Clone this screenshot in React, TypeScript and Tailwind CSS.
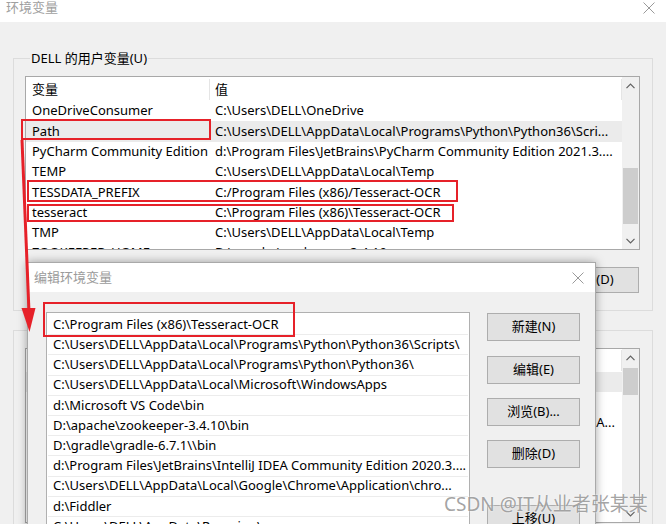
import React from "react";

const userVars: [string, string][] = [
  ["OneDriveConsumer", "C:\\Users\\DELL\\OneDrive"],
  ["Path", "C:\\Users\\DELL\\AppData\\Local\\Programs\\Python\\Python36\\Scri..."],
  ["PyCharm Community Edition", "d:\\Program Files\\JetBrains\\PyCharm Community Edition 2021.3...."],
  ["TEMP", "C:\\Users\\DELL\\AppData\\Local\\Temp"],
  ["TESSDATA_PREFIX", "C:/Program Files (x86)/Tesseract-OCR"],
  ["tesseract", "C:\\Program Files (x86)\\Tesseract-OCR"],
  ["TMP", "C:\\Users\\DELL\\AppData\\Local\\Temp"],
  ["ZOOKEEPER_HOME", "D:\\apache\\zookeeper-3.4.10"],
];

const sysVars: [string, string, boolean][] = [
  ["ComSpec", "C:\\Windows\\system32\\cmd.exe", false],
  ["DriverData", "C:\\Windows\\System32\\Drivers\\DriverData", false],
  ["IDEA_HOME", "d:\\Program Files\\JetBrains\\IntelliJ IDEA Community Edition 2020.3;d:\\Program Files\\JetBrains\\IntelliJ IDEA...", true],
  ["JAVA_HOME", "C:\\Program Files\\Java\\jdk1.8.0_211", false],
  ["NUMBER_OF_PROCESSORS", "8", false],
  ["OS", "Windows_NT", false],
  ["Path", "C:\\Windows\\system32", false],
  ["PATHEXT", ".COM;.EXE;.BAT", false],
];

const pathItems: string[] = [
  "C:\\Program Files (x86)\\Tesseract-OCR",
  "C:\\Users\\DELL\\AppData\\Local\\Programs\\Python\\Python36\\Scripts\\",
  "C:\\Users\\DELL\\AppData\\Local\\Programs\\Python\\Python36\\",
  "C:\\Users\\DELL\\AppData\\Local\\Microsoft\\WindowsApps",
  "d:\\Microsoft VS Code\\bin",
  "D:\\apache\\zookeeper-3.4.10\\bin",
  "D:\\gradle\\gradle-6.7.1\\\\bin",
  "d:\\Program Files\\JetBrains\\IntelliJ IDEA Community Edition 2020.3....",
  "C:\\Users\\DELL\\AppData\\Local\\Google\\Chrome\\Application\\chro...",
  "d:\\Fiddler",
  "C:\\Users\\DELL\\AppData\\Roaming\\npm",
];

function Chevron({ up }: { up?: boolean }) {
  return (
    <svg width="9" height="6" viewBox="0 0 9 6" className="block">
      <polyline
        points={up ? "0.5,5.2 4.5,1.2 8.5,5.2" : "0.5,0.8 4.5,4.8 8.5,0.8"}
        fill="none"
        stroke="#606060"
        strokeWidth="1.2"
      />
    </svg>
  );
}

function Button({ children, className = "" }: { children: React.ReactNode; className?: string }) {
  return (
    <div
      className={
        "flex items-center justify-center bg-[#e1e1e1] border border-[#adadad] text-black whitespace-nowrap " +
        className
      }
    >
      {children}
    </div>
  );
}

function ListHeader() {
  return (
    <div className="h-[23px] flex shrink-0">
      <div className="w-[184px] pl-[6px] flex items-center border-r border-[#e5e5e5] my-[1px]">变量</div>
      <div className="flex-1 min-w-0 pl-[5px] flex items-center border-r border-[#e5e5e5] my-[1px]">值</div>
    </div>
  );
}

export default function App() {
  return (
    <div className="relative w-[666px] h-[524px] overflow-hidden bg-[#f0f0f0] text-[13px] text-black font-['Noto_Sans','Noto_Sans_CJK_SC',sans-serif]">
      {/* background window title bar */}
      <div className="h-[22px] bg-white flex items-start justify-between pl-[6px] pr-[11px]">
        <span className="leading-[15px] text-[#a0a0a0]">环境变量</span>
        <svg width="12" height="12" viewBox="0 0 12 12" className="mt-[2px]">
          <path d="M0.5 0.5 L11.5 11.5 M11.5 0.5 L0.5 11.5" stroke="#9a9a9a" strokeWidth="1" />
        </svg>
      </div>

      {/* user variables group */}
      <fieldset className="min-w-0 mx-[13px] mt-[28px] border border-[#dcdcdc] pl-[11px] pr-[12px] pt-[10px] pb-[17px]">
        <legend className="ml-[5px] px-[1px] leading-[16px]">DELL 的用户变量(U)</legend>
        <div className="h-[174px] border border-[#a8a8a8] bg-white flex">
          <div className="flex-1 min-w-0 flex flex-col overflow-hidden pt-[1px]">
            <ListHeader />
            {userVars.map(([k, v], i) => (
              <div
                key={k}
                className={"h-[20.3px] shrink-0 flex items-center " + (i === 1 ? "bg-[#ebebeb]" : "")}
              >
                <div className="w-[184px] shrink-0 pl-[6px] whitespace-nowrap overflow-hidden">{k}</div>
                <div className="flex-1 min-w-0 pl-[5px] whitespace-nowrap overflow-hidden">{v}</div>
              </div>
            ))}
          </div>
          <div className="w-[17px] shrink-0 bg-[#f0f0f0] flex flex-col">
            <div className="h-[17px] flex items-center justify-center">
              <Chevron up />
            </div>
            <div className="flex-1 px-[1px]">
              <div className="mt-[74px] h-[56px] bg-[#cdcdcd]" />
            </div>
            <div className="h-[17px] flex items-center justify-center">
              <Chevron />
            </div>
          </div>
        </div>
        <div className="mt-[17px] flex justify-end gap-[8px] pr-[1px]">
          <Button className="w-[94px] h-[26px]">新建(N)...</Button>
          <Button className="w-[94px] h-[26px]">编辑(E)...</Button>
          <Button className="w-[94px] h-[26px]">删除(D)</Button>
        </div>
      </fieldset>

      {/* system variables group */}
      <fieldset className="min-w-0 mx-[13px] mt-[11px] border border-[#dcdcdc] pl-[11px] pr-[12px] pt-[10px] pb-[17px]">
        <legend className="ml-[5px] px-[1px] leading-[16px]">系统变量(S)</legend>
        <div className="h-[175px] border border-[#a8a8a8] bg-white flex">
          <div className="flex-1 min-w-0 flex flex-col overflow-hidden">
            <ListHeader />
            {sysVars.map(([k, v, tail], i) => (
              <div
                key={k}
                className={"h-[20.3px] shrink-0 flex items-center " + (i === 0 ? "bg-[#ebebeb]" : "")}
              >
                <div className="w-[184px] shrink-0 pl-[6px] whitespace-nowrap overflow-hidden">{k}</div>
                <div
                  className={
                    "flex-1 min-w-0 pl-[5px] pr-[7px] flex overflow-hidden " +
                    (tail ? "justify-end" : "justify-start")
                  }
                >
                  <span className="whitespace-nowrap shrink-0">{v}</span>
                </div>
              </div>
            ))}
          </div>
          <div className="w-[17px] shrink-0 bg-[#f0f0f0] flex flex-col">
            <div className="h-[17px] flex items-center justify-center">
              <Chevron up />
            </div>
            <div className="flex-1 px-[1px]">
              <div className="mt-[2px] h-[27px] bg-[#cdcdcd]" />
            </div>
            <div className="h-[17px] flex items-center justify-center">
              <Chevron />
            </div>
          </div>
        </div>
      </fieldset>

      {/* edit environment variable dialog (window over window) */}
      <div className="absolute left-[27px] top-[262px] w-[569px] h-[290px] bg-[#f0f0f0] border border-[#a9a9a9] shadow-[0_0_9px_rgba(0,0,0,0.35)] flex flex-col">
        <div className="h-[29px] bg-white flex items-center justify-between pl-[6px] pr-[11px] shrink-0">
          <span className="text-[#9b9b9b]">编辑环境变量</span>
          <svg width="12" height="12" viewBox="0 0 12 12">
            <path d="M0.5 0.5 L11.5 11.5 M11.5 0.5 L0.5 11.5" stroke="#9a9a9a" strokeWidth="1" />
          </svg>
        </div>
        <div className="flex pl-[18px] pt-[20px]">
          <div className="w-[424px] h-[240px] border border-[#b0b0b0] bg-white pt-[2px] px-[1px] overflow-hidden">
            {pathItems.map((p) => (
              <div
                key={p}
                className="h-[20.2px] pl-[5px] flex items-center border-b border-[#ececec] whitespace-nowrap overflow-hidden"
              >
                {p}
              </div>
            ))}
          </div>
          <div className="ml-[17px] flex flex-col">
            <Button className="w-[93px] h-[28px] mt-[1px]">新建(N)</Button>
            <Button className="w-[93px] h-[28px] mt-[15px]">编辑(E)</Button>
            <Button className="w-[93px] h-[28px] mt-[14px]">浏览(B)...</Button>
            <Button className="w-[93px] h-[28px] mt-[14px]">删除(D)</Button>
            <Button className="w-[93px] h-[28px] mt-[37px]">上移(U)</Button>
          </div>
        </div>
      </div>

      {/* red annotations */}
      <div className="absolute left-[21px] top-[119px] w-[190px] h-[21px] border-2 border-[#e62129]" />
      <div className="absolute left-[27px] top-[180px] w-[431px] h-[22px] border-2 border-[#e62129]" />
      <div className="absolute left-[27px] top-[204px] w-[427px] h-[18px] border-2 border-[#e62129]" />
      <div className="absolute left-[43px] top-[302px] w-[252px] h-[35px] border-2 border-[#e62129]" />
      <svg className="absolute left-0 top-0" width="40" height="340" viewBox="0 0 40 340">
        <line x1="22" y1="140" x2="29" y2="312" stroke="#e62129" strokeWidth="3" />
        <polygon points="21.5,308 35.5,308 29.5,332" fill="#e62129" />
      </svg>

      {/* watermark */}
      <div className="absolute left-[444px] top-[492px] text-[19px] leading-[24px] text-[#8c8c8c]/80 whitespace-nowrap [text-shadow:0_0_2px_#ffffff]">
        CSDN @IT从业者张某某
      </div>
    </div>
  );
}
